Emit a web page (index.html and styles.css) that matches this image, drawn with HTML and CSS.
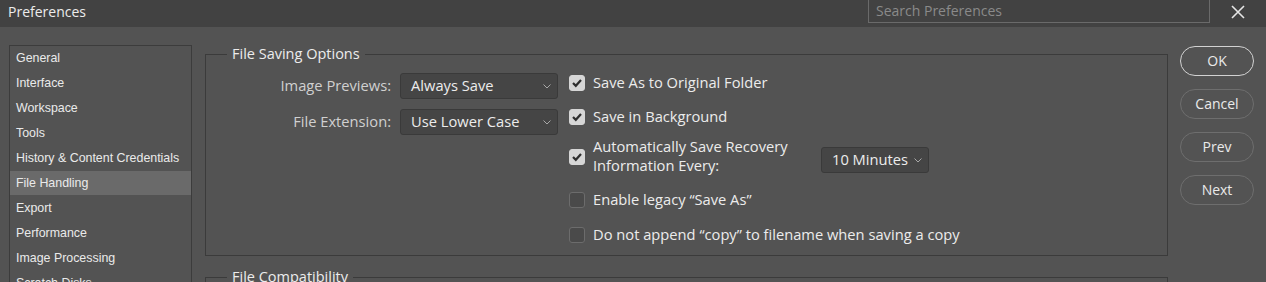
FILE: index.html
```html
<!DOCTYPE html>
<html>
<head>
<meta charset="utf-8">
<link rel="stylesheet" href="styles.css">
</head>
<body>
<div class="titlebar">
  <div class="title">Preferences</div>
  <div class="search">Search Preferences</div>
  <div class="close">
    <svg width="14" height="14" viewBox="0 0 14 14"><path d="M1 1 L13 13 M13 1 L1 13" stroke="#e6e6e6" stroke-width="1.6" fill="none"/></svg>
  </div>
</div>
<div class="main">
  <nav class="sidebar">
    <div class="item">General</div>
    <div class="item">Interface</div>
    <div class="item">Workspace</div>
    <div class="item">Tools</div>
    <div class="item">History &amp; Content Credentials</div>
    <div class="item selected">File Handling</div>
    <div class="item">Export</div>
    <div class="item">Performance</div>
    <div class="item">Image Processing</div>
    <div class="item">Scratch Disks</div>
  </nav>
  <div class="content">
    <fieldset class="group">
      <legend>File Saving Options</legend>
      <div class="group-body">
        <div class="fields">
          <div class="label">Image Previews:</div>
          <div class="select"><span>Always Save</span><svg class="chev" width="8" height="5" viewBox="0 0 8 5"><path d="M0.5 0.5 L4 4 L7.5 0.5" stroke="#a8a8a8" stroke-width="1" fill="none"/></svg></div>
          <div class="label">File Extension:</div>
          <div class="select"><span>Use Lower Case</span><svg class="chev" width="8" height="5" viewBox="0 0 8 5"><path d="M0.5 0.5 L4 4 L7.5 0.5" stroke="#a8a8a8" stroke-width="1" fill="none"/></svg></div>
        </div>
        <div class="checks">
          <div class="check r1"><span class="box on"><svg width="12" height="10" viewBox="0 0 12 10"><path d="M2 5 L4.8 7.8 L10 2" stroke="#2e2e2e" stroke-width="2.2" fill="none"/></svg></span><span class="text">Save As to Original Folder</span></div>
          <div class="check r2"><span class="box on"><svg width="12" height="10" viewBox="0 0 12 10"><path d="M2 5 L4.8 7.8 L10 2" stroke="#2e2e2e" stroke-width="2.2" fill="none"/></svg></span><span class="text">Save in Background</span></div>
          <div class="check r3"><span class="box on"><svg width="12" height="10" viewBox="0 0 12 10"><path d="M2 5 L4.8 7.8 L10 2" stroke="#2e2e2e" stroke-width="2.2" fill="none"/></svg></span><span class="text two">Automatically Save Recovery<br>Information Every:</span><div class="select small"><span>10 Minutes</span><svg class="chev" width="8" height="5" viewBox="0 0 8 5"><path d="M0.5 0.5 L4 4 L7.5 0.5" stroke="#a8a8a8" stroke-width="1" fill="none"/></svg></div></div>
          <div class="check r4"><span class="box"></span><span class="text">Enable legacy “Save As”</span></div>
          <div class="check r5"><span class="box"></span><span class="text">Do not append “copy” to filename when saving a copy</span></div>
        </div>
      </div>
    </fieldset>
    <fieldset class="group second">
      <legend>File Compatibility</legend>
    </fieldset>
  </div>
  <div class="buttons">
    <div class="btn default">OK</div>
    <div class="btn">Cancel</div>
    <div class="btn">Prev</div>
    <div class="btn">Next</div>
  </div>
</div>
</body>
</html>
```
FILE: styles.css
```css
html, body {
  margin: 0;
  padding: 0;
  background: #535353;
  overflow: hidden;
  height: 282px;
}
body {
  font-family: "Open Sans", "Liberation Sans", Arial, sans-serif;
  color: #e4e4e4;
  font-size: 14.7px;
}
.titlebar {
  height: 27px;
  background: #424242;
  display: flex;
  align-items: flex-start;
}
.title {
  padding-left: 8px;
  font-size: 14px;
  line-height: 23px;
  color: #ececec;
}
.search {
  margin-left: auto;
  width: 333px;
  height: 22px;
  border: 1px solid #6a6a6a;
  border-top: none;
  padding-left: 7px;
  line-height: 22px;
  color: #8a8a8a;
  font-size: 14px;
}
.close {
  width: 56px;
  height: 23px;
  display: flex;
  align-items: center;
  justify-content: center;
}
.main {
  display: flex;
  align-items: flex-start;
}
.sidebar {
  margin: 18px 0 0 9px;
  width: 181px;
  border: 1px solid #3c3c3c;
  border-bottom: none;
  flex: none;
  font-family: "Liberation Sans", Arial, sans-serif;
}
.item {
  height: 25px;
  line-height: 25px;
  padding-left: 6px;
  font-size: 12.4px;
  color: #eaeaea;
  white-space: nowrap;
}
.item.selected {
  background: #6a6a6a;
  height: 24px;
  line-height: 24px;
  margin-bottom: 1px;
}
.content {
  margin-left: 13px;
  width: 963px;
  flex: none;
  display: flex;
  flex-direction: column;
}
.group {
  margin: 18px 0 0 0;
  padding: 0;
  border: 1px solid #3b3b3b;
  min-width: 0;
}
.group legend {
  margin-left: 21px;
  padding: 0 5px;
  font-size: 14.5px;
  line-height: 18px;
  color: #ececec;
}
.group.second {
  margin-top: 12px;
  height: 40px;
}
.group-body {
  display: flex;
  padding: 10px 0 10px 0;
}
.fields {
  display: grid;
  grid-template-columns: 185px 158px;
  column-gap: 9px;
  row-gap: 10px;
  align-content: start;
}
.label {
  text-align: right;
  line-height: 25px;
  padding-bottom: 1px;
  color: #d0d0d0;
}
.select {
  height: 24px;
  background: #454545;
  border: 1px solid #3a3a3a;
  border-radius: 3px;
  display: flex;
  align-items: center;
  padding: 0 6px 0 10px;
  color: #ececec;
}
.select span {
  flex: 1;
  line-height: 22px;
  margin-bottom: 2px;
}
.chev {
  flex: none;
}
.select.small {
  width: 90px;
  margin-top: 6px;
}
.checks {
  margin-left: 11px;
  display: flex;
  flex-direction: column;
}
.check {
  display: flex;
  align-items: center;
  color: #ececec;
  white-space: nowrap;
}
.check .text {
  line-height: 20px;
  margin-top: -1px;
  padding-bottom: 1px;
}
.check .box {
  width: 16px;
  height: 16px;
  box-sizing: border-box;
  border-radius: 3px;
  border: 1px solid #6c6c6c;
  background: #4a4a4a;
  margin-right: 8px;
  flex: none;
  display: flex;
  align-items: center;
  justify-content: center;
}
.check .box.on {
  background: #d6d6d6;
  border-color: #d6d6d6;
}
.check .two {
  width: 228px;
  line-height: 19px;
}
.r1 { margin-top: 0; }
.r2 { margin-top: 14px; }
.r3 { margin-top: 11px; }
.r4 { margin-top: 14px; }
.r5 { margin-top: 15px; }
.buttons {
  margin: 19px 0 0 12px;
  display: flex;
  flex-direction: column;
  gap: 13px;
  flex: none;
}
.btn {
  width: 72px;
  height: 28px;
  border: 1px solid #6e6e6e;
  border-radius: 15px;
  text-align: center;
  line-height: 28px;
  color: #eaeaea;
  font-size: 14px;
}
.btn.default {
  border: 1.5px solid #d2d2d2;
}
```
